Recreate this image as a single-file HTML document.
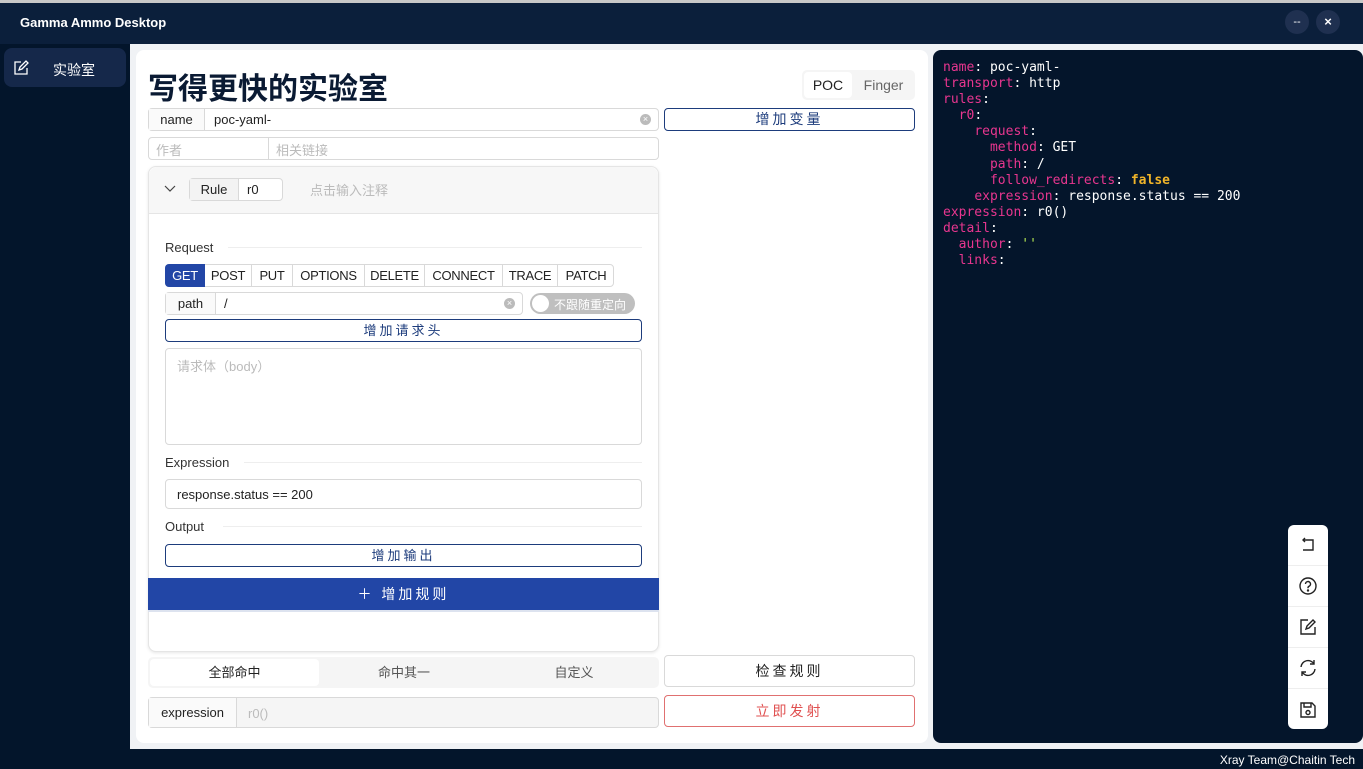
<!DOCTYPE html>
<html><head><meta charset="utf-8">
<style>
*{box-sizing:border-box;margin:0;padding:0}
body{width:1363px;height:769px;overflow:hidden;position:relative;background:#f0f2f5;font-family:"Liberation Sans","Noto Sans CJK SC",sans-serif;font-size:14px;color:#222}
.a{position:absolute}
.box{position:absolute;border:1px solid #d9d9d9;border-radius:4px;background:#fff}
.btn{position:absolute;border:1px solid #1d3c7c;border-radius:4px;color:#1d3c7c;text-align:center;letter-spacing:3px;background:#fff}
.ph{color:#bbb}
.lbl{position:absolute;font-size:14px;color:#333}
.line{position:absolute;height:1px;background:#eee}
.code{position:absolute;left:943px;top:60px;font-family:"DejaVu Sans Mono","Liberation Mono",monospace;font-size:13px;line-height:16.1px;color:#fff;white-space:pre}
.k{color:#e8368f}.f{color:#f0b429;font-weight:bold}.s{color:#b5e853}
.tb{position:absolute;left:1288px;width:40px;height:41px;display:flex;align-items:center;justify-content:center;border-bottom:1px solid #eee}
.m{text-align:center;border-right:1px solid #d9d9d9}
</style></head><body>
<div class="a" style="left:0;top:0;width:1363px;height:4px;background:#c8c8c8"></div>
<div class="a" style="left:0;top:3px;width:1363px;height:41px;background:#0b1f3b"></div>
<div class="a" style="left:20px;top:15px;color:#fff;font-size:13px;font-weight:bold">Gamma Ammo Desktop</div>
<div class="a" style="left:1285px;top:10px;width:24px;height:24px;border-radius:12px;background:#1f3050;color:#fff;font-size:11px;text-align:center;line-height:24px">--</div>
<div class="a" style="left:1316px;top:10px;width:24px;height:24px;border-radius:12px;background:#1f3050;color:#fff;font-size:13px;text-align:center;line-height:23px;font-weight:bold">×</div>
<div class="a" style="left:0;top:44px;width:130px;height:725px;background:#03152b"></div>
<div class="a" style="left:4px;top:48px;width:122px;height:39px;background:#15284a;border-radius:8px"></div>
<svg class="a" style="left:13px;top:60px" width="16" height="16" viewBox="0 0 16 16" fill="none" stroke="#fff" stroke-width="1.3"><path d="M8 2H2v12h12V8"/><path d="M6 10l1-3 6-6 2 2-6 6z"/></svg>
<div class="a" style="left:53px;top:60px;color:#fff;font-size:14px">实验室</div>
<div class="a" style="left:0;top:749px;width:1363px;height:20px;background:#03152b"></div>
<div class="a" style="right:8px;top:753px;color:#fff;font-size:12px">Xray Team@Chaitin Tech</div>

<div class="a" style="left:136px;top:50px;width:792px;height:693px;background:#fff;border-radius:8px"></div>
<div class="a" style="left:933px;top:50px;width:430px;height:693px;background:#04152b;border-radius:8px"></div>

<div class="a" style="left:148px;top:64px;font-size:30px;font-weight:bold;color:#0a1a33">写得更快的实验室</div>
<div class="a" style="left:802px;top:70px;width:113px;height:30px;background:#f5f5f5;border-radius:5px"></div>
<div class="a" style="left:804px;top:72px;width:48px;height:26px;background:#fff;border-radius:4px;text-align:center;line-height:27px;color:#222">POC</div>
<div class="a" style="left:856px;top:72px;width:55px;height:26px;text-align:center;line-height:27px;color:#666">Finger</div>

<div class="box" style="left:148px;top:108px;width:511px;height:23px"></div>
<div class="a" style="left:149px;top:109px;width:56px;height:21px;background:#fafafa;border-right:1px solid #d9d9d9;text-align:center;line-height:22px;font-size:13px">name</div>
<div class="a" style="left:214px;top:112px;font-size:13px">poc-yaml-</div>
<div class="a" style="left:640px;top:114px;width:11px;height:11px;border-radius:6px;background:#bbb;color:#fff;font-size:9px;text-align:center;line-height:11px">×</div>
<div class="btn" style="left:664px;top:108px;width:251px;height:23px;line-height:21px">增加变量</div>

<div class="box" style="left:148px;top:137px;width:511px;height:23px"></div>
<div class="a" style="left:268px;top:138px;width:1px;height:21px;background:#d9d9d9"></div>
<div class="a ph" style="left:156px;top:140px;font-size:13px">作者</div>
<div class="a ph" style="left:276px;top:140px;font-size:13px">相关链接</div>

<div class="a" style="left:148px;top:166px;width:511px;height:486px;border:1px solid #e5e5e5;border-radius:8px;background:#fff;box-shadow:0 1px 3px rgba(0,0,0,.1)"></div>
<div class="a" style="left:149px;top:167px;width:509px;height:47px;background:#f7f7f7;border-bottom:1px solid #e5e5e5;border-radius:8px 8px 0 0"></div>
<svg class="a" style="left:164px;top:184px" width="12" height="10" viewBox="0 0 12 10" fill="none" stroke="#444" stroke-width="1.2"><path d="M1 2l5 5 5-5"/></svg>
<div class="box" style="left:189px;top:178px;width:94px;height:23px"></div>
<div class="a" style="left:190px;top:179px;width:49px;height:21px;background:#f3f3f3;border-right:1px solid #d9d9d9;text-align:center;line-height:22px;font-size:13px">Rule</div>
<div class="a" style="left:247px;top:182px;font-size:13px">r0</div>
<div class="a ph" style="left:310px;top:180px;font-size:13px">点击输入注释</div>

<div class="lbl" style="left:165px;top:240px;font-size:13px">Request</div>
<div class="line" style="left:228px;top:247px;width:414px"></div>
<div class="box" style="left:165px;top:264px;width:449px;height:23px"></div>
<div class="a" style="left:165px;top:264px;height:23px;display:flex;font-size:13px;line-height:23px;letter-spacing:-0.3px">
<div style="width:40px;background:#2246a6;color:#fff;text-align:center;border-radius:4px 0 0 4px">GET</div>
<div class="m" style="width:47px">POST</div>
<div class="m" style="width:41px">PUT</div>
<div class="m" style="width:72px">OPTIONS</div>
<div class="m" style="width:60px">DELETE</div>
<div class="m" style="width:78px">CONNECT</div>
<div class="m" style="width:55px">TRACE</div>
<div style="width:56px;text-align:center">PATCH</div>
</div>
<div class="box" style="left:165px;top:292px;width:358px;height:23px"></div>
<div class="a" style="left:166px;top:293px;width:50px;height:21px;background:#fafafa;border-right:1px solid #d9d9d9;text-align:center;line-height:22px;font-size:13px">path</div>
<div class="a" style="left:224px;top:296px;font-size:13px">/</div>
<div class="a" style="left:504px;top:298px;width:11px;height:11px;border-radius:6px;background:#bbb;color:#fff;font-size:9px;text-align:center;line-height:11px">×</div>
<div class="a" style="left:530px;top:293px;width:105px;height:21px;border-radius:11px;background:#bfbfbf"></div>
<div class="a" style="left:532px;top:295px;width:17px;height:17px;border-radius:9px;background:#fff"></div>
<div class="a" style="left:554px;top:296px;color:#fff;font-size:12px">不跟随重定向</div>
<div class="btn" style="left:165px;top:319px;width:477px;height:23px;line-height:21px;font-size:13px">增加请求头</div>
<div class="box" style="left:165px;top:348px;width:477px;height:97px"></div>
<div class="a ph" style="left:177px;top:356px;font-size:13px">请求体（body）</div>
<div class="lbl" style="left:165px;top:455px;font-size:13px">Expression</div>
<div class="line" style="left:244px;top:462px;width:398px"></div>
<div class="box" style="left:165px;top:479px;width:477px;height:30px"></div>
<div class="a" style="left:177px;top:487px;font-size:13px">response.status == 200</div>
<div class="lbl" style="left:165px;top:519px;font-size:13px">Output</div>
<div class="line" style="left:223px;top:526px;width:419px"></div>
<div class="btn" style="left:165px;top:544px;width:477px;height:23px;line-height:21px;font-size:13px">增加输出</div>
<div class="a" style="left:148px;top:578px;width:511px;height:32px;background:#2246a6;color:#fff;text-align:center;line-height:32px;letter-spacing:3px;font-size:14px">＋ 增加规则</div>
<div class="a" style="left:148px;top:610px;width:511px;height:2px;background:#dde3ef"></div>

<div class="a" style="left:148px;top:657px;width:511px;height:31px;background:#f5f5f5;border-radius:5px"></div>
<div class="a" style="left:150px;top:659px;width:169px;height:27px;background:#fff;border-radius:4px;text-align:center;line-height:28px;font-size:13px">全部命中</div>
<div class="a" style="left:319px;top:659px;width:170px;height:27px;text-align:center;line-height:28px;font-size:13px;color:#555">命中其一</div>
<div class="a" style="left:489px;top:659px;width:170px;height:27px;text-align:center;line-height:28px;font-size:13px;color:#555">自定义</div>
<div class="box" style="left:664px;top:655px;width:251px;height:32px;text-align:center;line-height:31px;letter-spacing:3px">检查规则</div>
<div class="box" style="left:148px;top:697px;width:511px;height:31px;background:#f5f5f5"></div>
<div class="a" style="left:149px;top:698px;width:88px;height:29px;background:#fafafa;border-right:1px solid #d9d9d9;text-align:center;line-height:30px;font-size:13px">expression</div>
<div class="a ph" style="left:248px;top:706px;font-size:13px">r0()</div>
<div class="box" style="left:664px;top:695px;width:251px;height:32px;border-color:#e07070;color:#e05050;text-align:center;line-height:31px;letter-spacing:3px">立即发射</div>

<div class="code"><span class="k">name</span>: poc-yaml-
<span class="k">transport</span>: http
<span class="k">rules</span>:
  <span class="k">r0</span>:
    <span class="k">request</span>:
      <span class="k">method</span>: GET
      <span class="k">path</span>: /
      <span class="k">follow_redirects</span>: <span class="f">false</span>
    <span class="k">expression</span>: response.status == 200
<span class="k">expression</span>: r0()
<span class="k">detail</span>:
  <span class="k">author</span>: <span class="s">''</span>
  <span class="k">links</span>:</div>

<div class="a" style="left:1288px;top:525px;width:40px;height:204px;background:#fff;border-radius:6px"></div>
<div class="tb" style="top:525px"><svg width="18" height="18" viewBox="0 0 18 18" fill="none" stroke="#222" stroke-width="1.4"><path d="M4 4h10v10H4"/><path d="M6 2L4 4l2 2"/></svg></div>
<div class="tb" style="top:566px"><svg width="20" height="20" viewBox="0 0 20 20" fill="none" stroke="#222" stroke-width="1.4"><circle cx="10" cy="10" r="8"/><path d="M7.5 8a2.5 2.5 0 1 1 3.5 2.3c-.7.3-1 .8-1 1.5v.5"/><circle cx="10" cy="14.5" r=".5" fill="#222"/></svg></div>
<div class="tb" style="top:607px"><svg width="18" height="18" viewBox="0 0 18 18" fill="none" stroke="#222" stroke-width="1.4"><path d="M9 2H2v14h14V9"/><path d="M7 11l1-3 6-6 2 2-6 6z"/></svg></div>
<div class="tb" style="top:648px"><svg width="20" height="20" viewBox="0 0 20 20" fill="none" stroke="#222" stroke-width="1.4"><path d="M3 9a7 7 0 0 1 13-3"/><path d="M16 2v4h-4"/><path d="M17 11a7 7 0 0 1-13 3"/><path d="M4 18v-4h4"/></svg></div>
<div class="tb" style="top:689px;border:none"><svg width="18" height="18" viewBox="0 0 18 18" fill="none" stroke="#222" stroke-width="1.4"><path d="M2 2h11l3 3v11H2z"/><path d="M5 2v4h7V2"/><circle cx="9" cy="11.5" r="2"/></svg></div>
</body></html>
